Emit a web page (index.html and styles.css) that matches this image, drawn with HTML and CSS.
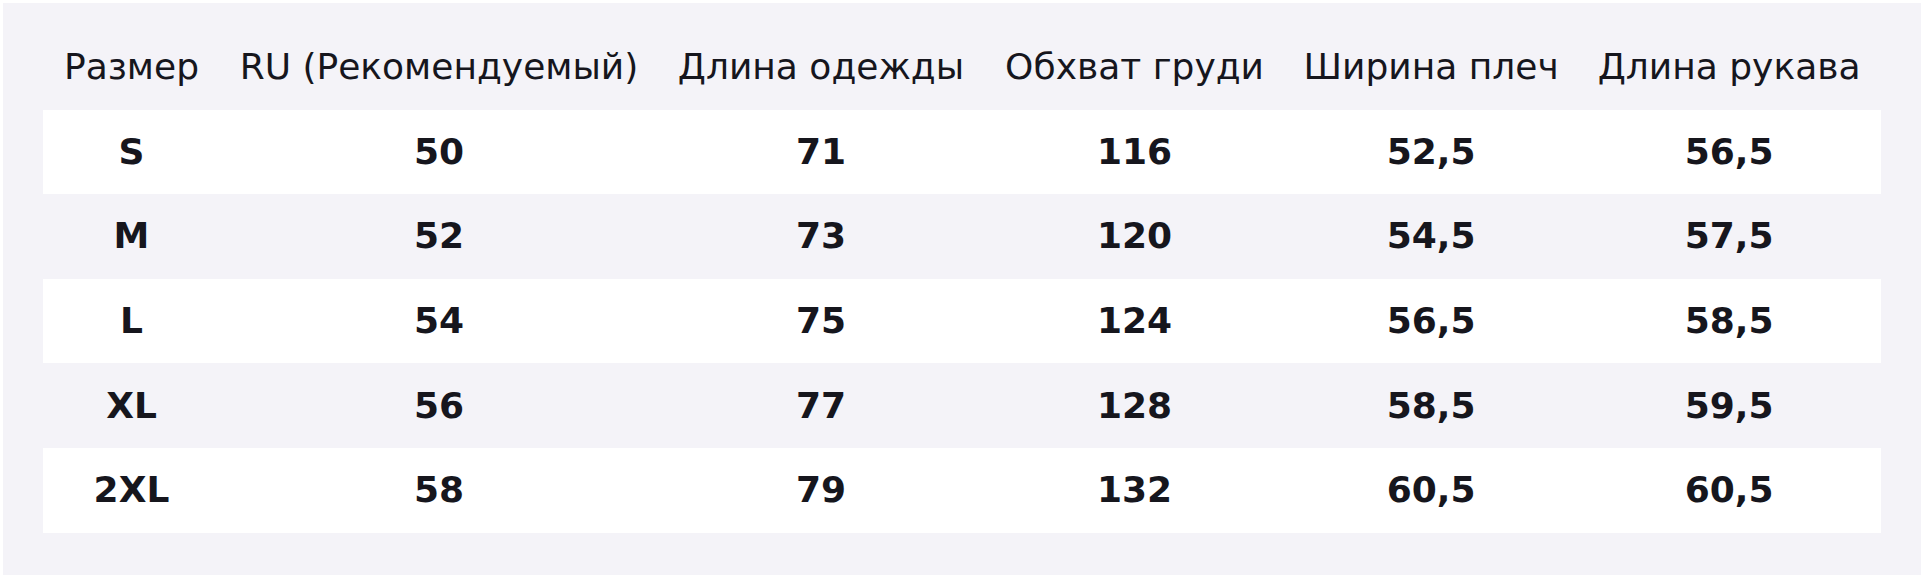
FILE: index.html
```html
<!DOCTYPE html>
<html lang="ru">
<head>
<meta charset="utf-8">
<title>Таблица размеров</title>
<link rel="stylesheet" href="styles.css">
</head>
<body>
<div class="panel">
  <table class="sizes">
    <colgroup>
      <col class="c-size">
      <col class="c-ru">
      <col class="c-len">
      <col class="c-chest">
      <col class="c-shoulder">
      <col class="c-sleeve">
    </colgroup>
    <thead>
      <tr>
        <th>Размер</th>
        <th>RU (Рекомендуемый)</th>
        <th>Длина одежды</th>
        <th>Обхват груди</th>
        <th>Ширина плеч</th>
        <th>Длина рукава</th>
      </tr>
    </thead>
    <tbody>
      <tr><td>S</td><td>50</td><td>71</td><td>116</td><td>52,5</td><td>56,5</td></tr>
      <tr><td>M</td><td>52</td><td>73</td><td>120</td><td>54,5</td><td>57,5</td></tr>
      <tr><td>L</td><td>54</td><td>75</td><td>124</td><td>56,5</td><td>58,5</td></tr>
      <tr><td>XL</td><td>56</td><td>77</td><td>128</td><td>58,5</td><td>59,5</td></tr>
      <tr><td>2XL</td><td>58</td><td>79</td><td>132</td><td>60,5</td><td>60,5</td></tr>
    </tbody>
  </table>
</div>
</body>
</html>
```

FILE: styles.css
```css
html, body {
  margin: 0;
  padding: 0;
  background: #ffffff;
}

body {
  padding: 3px;
  font-family: "DejaVu Sans", Verdana, sans-serif;
  color: #16161d;
}

.panel {
  background: #f4f3f8;
  padding: 22px 40px 42px;
}

.sizes {
  width: 100%;
  table-layout: fixed;
  border-collapse: collapse;
  font-size: 36px;
  line-height: 42px;
}

.c-size { width: 9.63%; }
.c-ru { width: 23.83%; }
.c-len { width: 17.74%; }
.c-chest { width: 16.38%; }
.c-shoulder { width: 15.89%; }
.c-sleeve { width: 16.53%; }

.sizes th,
.sizes td {
  padding: 21.3px 0;
  text-align: center;
  white-space: nowrap;
}

.sizes th {
  font-weight: normal;
}

.sizes td {
  font-weight: bold;
}

.sizes tbody tr:nth-child(odd) {
  background: #ffffff;
}
```
